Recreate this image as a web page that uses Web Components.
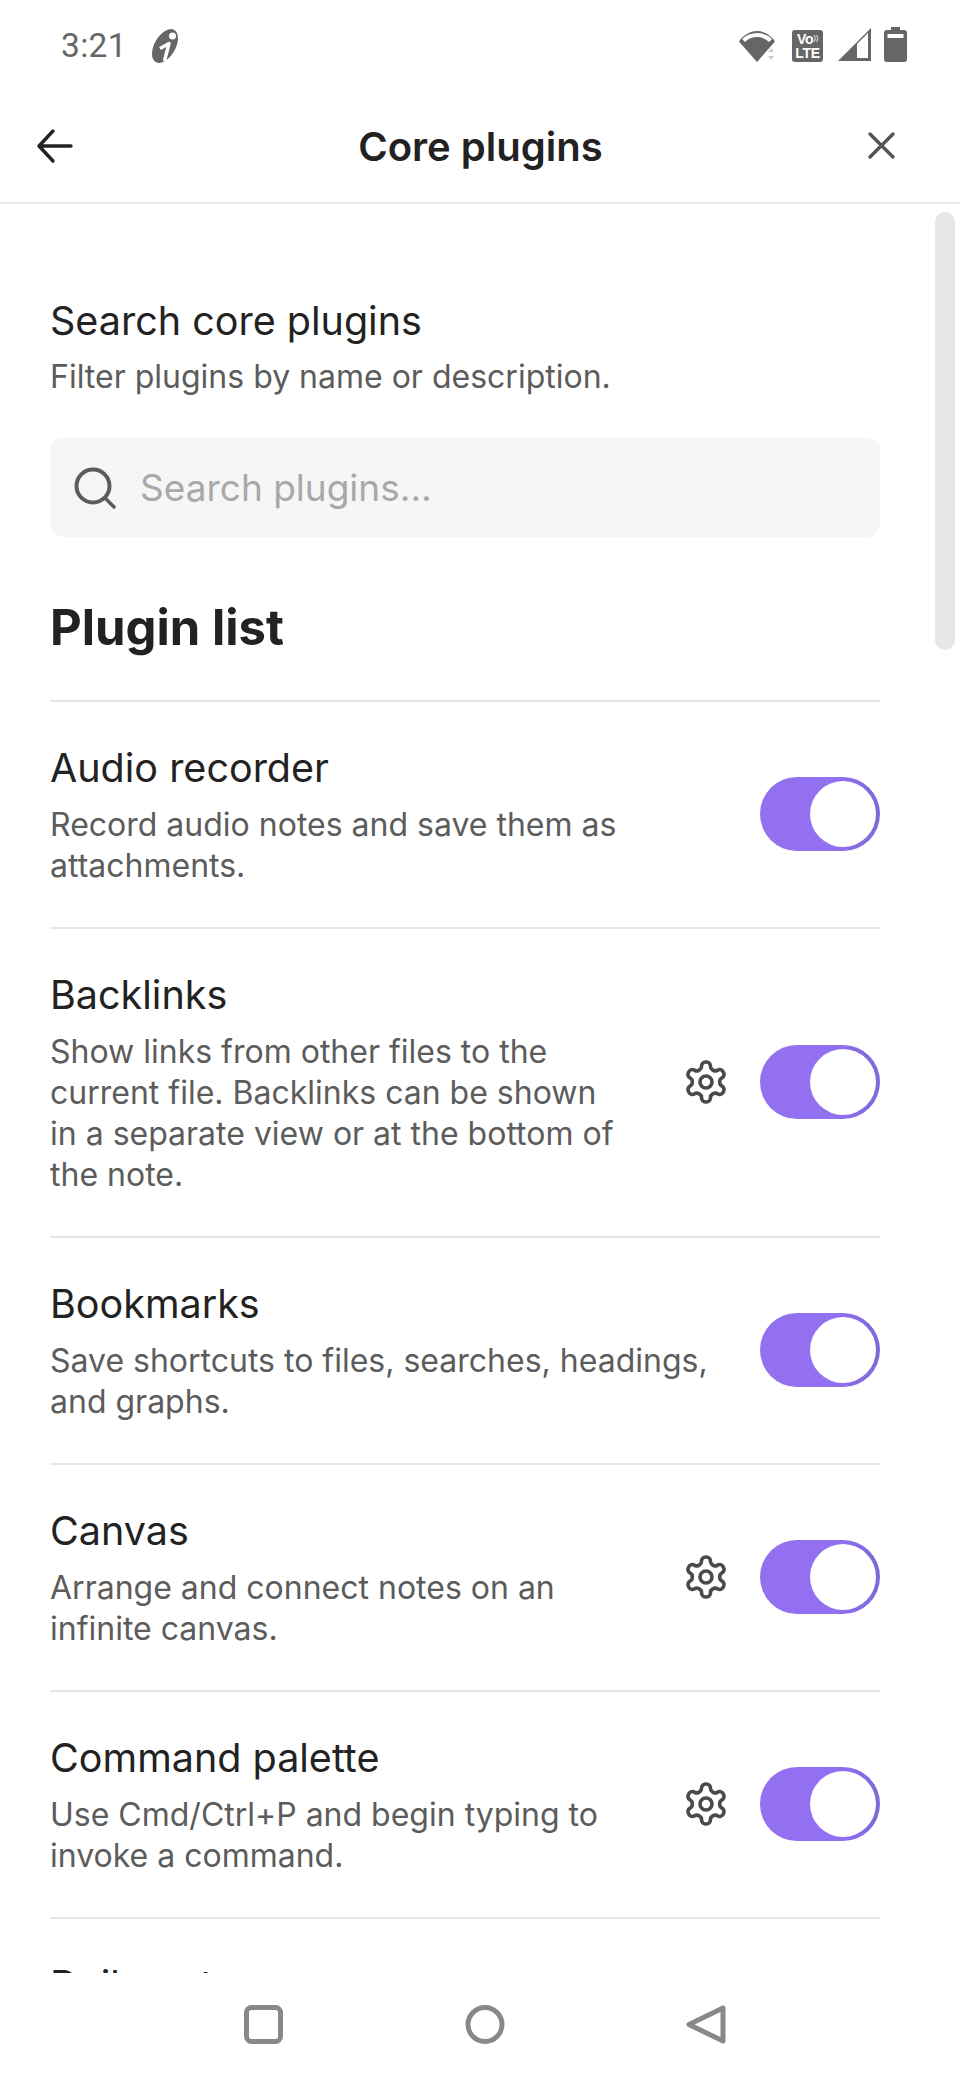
<!DOCTYPE html>
<html>
<head>
<meta charset="utf-8">
<title>Core plugins</title>
<style>
  html, body { margin: 0; padding: 0; background: #fff; }
  body { width: 960px; height: 2080px; overflow: hidden; display: flex; flex-direction: column; font-family: Inter, "Liberation Sans", sans-serif; color: #222; }
</style>
</head>
<body>
  <status-bar></status-bar>
  <app-header>Core plugins</app-header>
  <settings-page>
    <setting-search></setting-search>
    <h-list>Plugin list</h-list>
    <plugin-row name="Audio recorder">Record audio notes and save them as attachments.</plugin-row>
    <plugin-row name="Backlinks" gear>Show links from other files to the current file. Backlinks can be shown in a separate view or at the bottom of the note.</plugin-row>
    <plugin-row name="Bookmarks">Save shortcuts to files, searches, headings, and graphs.</plugin-row>
    <plugin-row name="Canvas" gear>Arrange and connect notes on an infinite canvas.</plugin-row>
    <plugin-row name="Command palette" gear>Use Cmd/Ctrl+P and begin typing to invoke a command.</plugin-row>
    <plugin-row name="Daily notes" gear>Open or create your daily note.</plugin-row>
  </settings-page>
  <nav-bar></nav-bar>

<script>
class StatusBar extends HTMLElement {
  constructor() {
    super();
    this.attachShadow({ mode: 'open' });
    this.shadowRoot.innerHTML = `
      <style>
        :host { display: flex; flex: none; height: 94px; align-items: flex-start; padding: 28px 53px 0 61px; box-sizing: border-box; color: #666; }
        .time { font: 400 33.5px/36px Roboto, sans-serif; letter-spacing: 0.3px; width: 87px; }
        .spacer { flex: 1; }
        svg { display: block; }
        .icons { display: flex; align-items: flex-start; }
        .volte { width: 31px; height: 32px; margin: 2px 15px 0 16px; background: #666; border-radius: 3px; color: #fff; font: 700 14px/14px "Liberation Sans", sans-serif; text-align: center; display: flex; flex-direction: column; justify-content: center; letter-spacing: -0.3px; }
        .volte b { font-size: 8px; line-height: 0; vertical-align: 4px; font-weight: 400; }
      </style>
      <span class="time">3:21</span>
      <svg width="34" height="36" viewBox="0 0 32 36">
        <ellipse cx="16" cy="18" rx="10.500" ry="18.500" transform="rotate(30 16 18)" fill="#666"/>
        <path d="M11 20.500 20 15.500 15.500 33" fill="none" stroke="#fff" stroke-width="3.500" stroke-linejoin="round"/>
        <circle cx="23.500" cy="8" r="3.500" fill="#fff"/>
      </svg>
      <span class="spacer"></span>
      <div class="icons">
        <svg width="38" height="34" viewBox="0 0 38 34" style="margin-top:1px">
          <path fill="#666" d="M19 33 1 12.500C5 6.500 12 2 19 2s14 4.500 18 10.500z"/>
          <path fill="none" stroke="#fff" stroke-width="4" d="M5.500 11.500C9 8 14 6 19 6s10 2 13.500 5.500"/>
          <path fill="#ccc" d="m33 19 3 4h-6zM30 27h6l-3 4z"/>
        </svg>
        <div class="volte"><span>Vo<b>))</b></span><span>LTE</span></div>
        <svg width="33" height="34" viewBox="0 0 33 34">
          <path fill="#666" d="M33 0v33H0z"/>
          <path fill="#fff" d="M19 16v14h11V5z"/>
        </svg>
        <svg width="23" height="35" viewBox="0 0 23 35" style="margin-left:13px;margin-top:-1px">
          <path fill="#666" d="M7 0h9v3h4c2 0 3 1 3 3v26c0 2-1 3-3 3H3c-2 0-3-1-3-3V6c0-2 1-3 3-3h4z"/>
          <path fill="#fff" d="M3.500 7h16v4h-16z"/>
        </svg>
      </div>
    `;
  }
}

class AppHeader extends HTMLElement {
  constructor() {
    super();
    this.attachShadow({ mode: 'open' });
    this.shadowRoot.innerHTML = `
      <style>
        :host { display: flex; flex: none; height: 110px; align-items: center; justify-content: space-between; padding: 0 63px 4px 36px; box-sizing: border-box; border-bottom: 2px solid #e8e8e8; }
        .title { font: 600 40px/44px Inter, sans-serif; color: #222; margin: 2px 0 0 20px; }
        svg { display: block; }
      </style>
      <svg width="38" height="36" viewBox="0 0 38 36" fill="none" stroke="#222" stroke-width="3.400" stroke-linecap="round" stroke-linejoin="round">
        <path d="M35 18H4M17 3 3 18l14 15"/>
      </svg>
      <span class="title"><slot></slot></span>
      <svg width="30" height="30" viewBox="0 0 30 30" fill="none" stroke="#555" stroke-width="3.400" stroke-linecap="round">
        <path d="M3 3l23 23M26 3 3 26"/>
      </svg>
    `;
  }
}

class SettingsPage extends HTMLElement {
  constructor() {
    super();
    this.attachShadow({ mode: 'open' });
    this.shadowRoot.innerHTML = `
      <style>
        :host { display: block; flex: none; height: 1769px; overflow: hidden; position: relative; padding: 0 80px 0 50px; box-sizing: border-box; }
        .thumb { position: absolute; top: 8px; left: 935px; width: 20px; height: 438px; background: #e6e6e6; border-radius: 10px; }
      </style>
      <div class="thumb"></div>
      <slot></slot>
    `;
  }
}

class SettingSearch extends HTMLElement {
  constructor() {
    super();
    this.attachShadow({ mode: 'open' });
    this.shadowRoot.innerHTML = `
      <style>
        :host { display: block; padding-top: 93px; }
        .name { font: 400 39.500px/48px Inter, sans-serif; color: #222; }
        .desc { font: 400 32px/41px Inter, sans-serif; color: #5c5c5c; margin-top: 11px; }
        .box { display: flex; align-items: center; height: 99px; margin-top: 41px; background: #f6f6f6; border-radius: 13px; padding-left: 24px; box-sizing: border-box; }
        svg { display: block; flex: none; }
        .placeholder { font: 400 37px/44px Inter, sans-serif; color: #a8a8a8; margin-left: 24px; }
      </style>
      <div class="name">Search core plugins</div>
      <div class="desc">Filter plugins by name or description.</div>
      <div class="box">
        <svg width="42" height="42" viewBox="0 0 42 42" fill="none" stroke="#5c5c5c" stroke-linecap="round">
          <circle cx="19" cy="19" r="16.500" stroke-width="4"/>
          <path d="M31 31l9 9" stroke-width="3.500"/>
        </svg>
        <span class="placeholder">Search plugins...</span>
      </div>
    `;
  }
}

class HList extends HTMLElement {
  constructor() {
    super();
    this.attachShadow({ mode: 'open' });
    this.shadowRoot.innerHTML = `
      <style>
        :host { display: block; padding: 64px 0 45px; font: 700 49px/54px Inter, sans-serif; color: #222; border-bottom: 2px solid #e6e6e6; }
      </style>
      <slot></slot>
    `;
  }
}

class ToggleSwitch extends HTMLElement {
  constructor() {
    super();
    this.attachShadow({ mode: 'open' });
    this.shadowRoot.innerHTML = `
      <style>
        :host { display: block; flex: none; width: 120px; height: 74px; margin-bottom: 2px; border-radius: 37px; background: linear-gradient(90deg, #9270ee, #9370f2 60%, #7f68d8 100%); position: relative; }
        .knob { position: absolute; top: 4px; right: 4px; width: 66px; height: 66px; border-radius: 50%; background: #fff; }
      </style>
      <div class="knob"></div>
    `;
  }
}

class PluginRow extends HTMLElement {
  static get observedAttributes() {
    return ['name'];
  }

  constructor() {
    super();
    this.attachShadow({ mode: 'open' });
    this.shadowRoot.innerHTML = `
      <style>
        :host { display: flex; align-items: center; padding: 42px 0 41px; border-bottom: 2px solid #e6e6e6; }
        .info { flex: 1; min-width: 0; }
        .name { font: 400 39.500px/48px Inter, sans-serif; color: #222; }
        .desc { font: 400 32px/41px Inter, sans-serif; color: #5c5c5c; margin-top: 12px; }
        .gear { flex: none; width: 48px; height: 48px; margin: 0 30px 2px 60px; display: none; }
        :host([gear]) .gear { display: block; }
        :host(:not([gear])) .info { padding-right: 40px; }
      </style>
      <div class="info">
        <div class="name"></div>
        <div class="desc"><slot></slot></div>
      </div>
      <svg class="gear" viewBox="0 0 24 24" fill="none" stroke="#4a4a4a" stroke-width="1.800" stroke-linecap="round" stroke-linejoin="round">
        <path d="M12.220 2h-.44a2 2 0 0 0-2 2v.18a2 2 0 0 1-1 1.730l-.43.25a2 2 0 0 1-2 0l-.15-.08a2 2 0 0 0-2.730.73l-.22.38a2 2 0 0 0 .73 2.730l.15.1a2 2 0 0 1 1 1.720v.51a2 2 0 0 1-1 1.740l-.15.09a2 2 0 0 0-.73 2.730l.22.38a2 2 0 0 0 2.730.73l.15-.08a2 2 0 0 1 2 0l.43.25a2 2 0 0 1 1 1.730V20a2 2 0 0 0 2 2h.44a2 2 0 0 0 2-2v-.18a2 2 0 0 1 1-1.730l.43-.25a2 2 0 0 1 2 0l.15.08a2 2 0 0 0 2.730-.73l.22-.39a2 2 0 0 0-.73-2.730l-.15-.08a2 2 0 0 1-1-1.740v-.5a2 2 0 0 1 1-1.740l.15-.09a2 2 0 0 0 .73-2.730l-.22-.38a2 2 0 0 0-2.730-.73l-.15.08a2 2 0 0 1-2 0l-.43-.25a2 2 0 0 1-1-1.730V4a2 2 0 0 0-2-2z"/>
        <circle cx="12" cy="12" r="3"/>
      </svg>
      <toggle-switch></toggle-switch>
    `;
  }

  attributeChangedCallback(name, oldValue, newValue) {
    if (name == 'name') {
      this.shadowRoot.querySelector('.name').textContent = newValue;
    }
  }
}

class NavBar extends HTMLElement {
  constructor() {
    super();
    this.attachShadow({ mode: 'open' });
    this.shadowRoot.innerHTML = `
      <style>
        :host { display: flex; flex: 1; align-items: flex-start; padding: 32px 0 0 244px; box-sizing: border-box; }
        svg { display: block; fill: none; stroke: #888; stroke-width: 5; stroke-linejoin: round; }
        .circle { margin-left: 182px; }
        .back { margin-left: 181px; }
      </style>
      <svg width="39" height="39" viewBox="0 0 39 39"><rect x="2.500" y="2.500" width="34" height="34" rx="5"/></svg>
      <svg class="circle" width="40" height="39" viewBox="0 0 40 39"><circle cx="20" cy="19.500" r="17"/></svg>
      <svg class="back" width="40" height="39" viewBox="0 0 40 39"><path d="M37 3 3 19.500 37 36z"/></svg>
    `;
  }
}

customElements.define('status-bar', StatusBar);
customElements.define('app-header', AppHeader);
customElements.define('settings-page', SettingsPage);
customElements.define('setting-search', SettingSearch);
customElements.define('h-list', HList);
customElements.define('toggle-switch', ToggleSwitch);
customElements.define('plugin-row', PluginRow);
customElements.define('nav-bar', NavBar);
</script>
</body>
</html>
